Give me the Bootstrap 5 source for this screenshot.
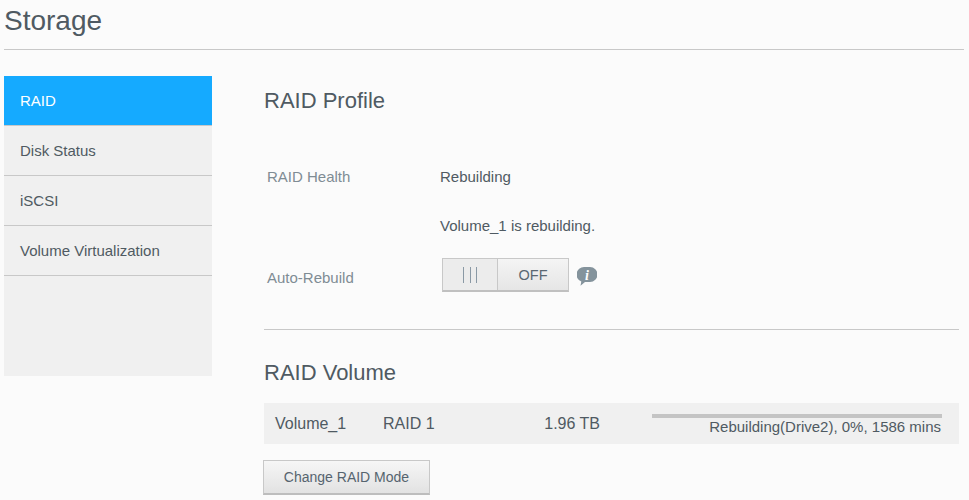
<!DOCTYPE html>
<html lang="en">
<head>
<meta charset="utf-8">
<title>Storage</title>
<link href="https://cdn.jsdelivr.net/npm/bootstrap@5.3.0/dist/css/bootstrap.min.css" rel="stylesheet">
<style>
html,body{height:500px;overflow:hidden}
body{background:#fbfbfb;font-family:"Liberation Sans",Arial,sans-serif;font-size:15px;color:#4f5a62;line-height:20px}
.page-head{margin:0 5px 0 4px;height:50px;border-bottom:1px solid #c8c8c8}
.page-title{font-size:28px;font-weight:400;line-height:30px;margin:0;padding-top:6px;color:#4f5a62}
.layout{margin-top:26px;padding-left:4px}
.side{width:208px;height:300px;background:#f0f0f0;flex:none}
.side-item{height:50px;padding:15px 16px 0;border-bottom:1px solid #c8c8c8;color:#4f5a62;text-decoration:none;display:block}
.side-item.on{background:#15aaff;color:#fff;border-bottom-color:#c8c8c8}
.main{margin-left:52px;width:695px}
.sec-title{font-size:22px;font-weight:400;line-height:26px;margin:0;color:#4f5a62}
.lbl{width:176px;padding-left:3px;color:#7f8c94;flex:none}
.lbl-low{padding-top:6px}
.form-rows{margin-top:53px}
.row-two{margin-top:29px}
.row-three{margin-top:22px}
.switcher{width:127px;height:34px;border:1px solid #c8c8c8;border-bottom:2px solid #c0c0c0;background:linear-gradient(#f4f4f4,#e6e6e6);margin-left:2px}
.switch-grip{width:55px;border-right:1px solid #c8c8c8;background:#ececec;gap:5.5px}
.switch-grip span{width:1px;height:16px;background:#8a99a5}
.switch-txt{color:#5a6873;font-size:14.5px}
.info-ic{width:20px;height:19px;margin:2px 0 0 8px;flex:none}
.divider{border-top:1px solid #c8c8c8;margin:37px 0 0;height:0}
.vol-title{margin-top:30px}
.vol-row{height:41px;background:#f0f0f0;margin-top:17px;font-size:16px}
.c1{width:119px;padding-left:11px;flex:none;padding-top:11px}
.c2{width:90px;flex:none;padding-top:11px}
.c3{width:127px;text-align:right;flex:none;padding-top:11px}
.c4{width:290px;margin-left:52px;flex:none;font-size:15px}
.bar{height:4px;background:#c4c4c4;margin-top:11px}
.bar-txt{text-align:right;line-height:18px;padding-right:1px}
.btn-change{width:167px;height:35px;margin:16px 0 0 -1px;padding:0;border:1px solid #c8c8c8;border-bottom:2px solid #bdbdbd;border-radius:0;background:linear-gradient(#f6f6f6,#e2e2e2);color:#56646f;font-size:14px;display:block}
</style>
</head>
<body>
<header class="page-head"><h1 class="page-title">Storage</h1></header>
<div class="layout d-flex">
  <nav class="side">
    <a class="side-item on" href="#">RAID</a>
    <a class="side-item" href="#">Disk Status</a>
    <a class="side-item" href="#">iSCSI</a>
    <a class="side-item" href="#">Volume Virtualization</a>
  </nav>
  <main class="main">
    <h2 class="sec-title pt-1 mt-2">RAID Profile</h2>
    <div class="form-rows">
      <div class="d-flex"><div class="lbl">RAID Health</div><div>Rebuilding</div></div>
      <div class="d-flex row-two"><div class="lbl"></div><div>Volume_1 is rebuilding.</div></div>
      <div class="d-flex align-items-center row-three">
        <div class="lbl lbl-low">Auto-Rebuild</div>
        <div class="switcher d-flex">
          <div class="switch-grip d-flex justify-content-center align-items-center"><span></span><span></span><span></span></div>
          <div class="switch-txt flex-grow-1 d-flex justify-content-center align-items-center">OFF</div>
        </div>
        <svg class="info-ic" viewBox="0 0 20 19" aria-hidden="true"><path d="M7 0h6a7 7 0 0 1 0 15H8l-4.500 3.800 .8-4.300A7.500 7.500 0 0 1 7 0z" fill="#84939c"/><text x="10" y="12.500" text-anchor="middle" font-family="Liberation Serif" font-style="italic" font-weight="700" font-size="14" fill="#fff">i</text></svg>
      </div>
    </div>
    <div class="divider"></div>
    <h2 class="sec-title vol-title">RAID Volume</h2>
    <div class="vol-row d-flex">
      <div class="c1">Volume_1</div>
      <div class="c2">RAID 1</div>
      <div class="c3">1.96 TB</div>
      <div class="c4"><div class="bar"></div><div class="bar-txt">Rebuilding(Drive2), 0%, 1586 mins</div></div>
    </div>
    <button class="btn btn-change" type="button">Change RAID Mode</button>
  </main>
</div>
<script src="https://cdn.jsdelivr.net/npm/bootstrap@5.3.0/dist/js/bootstrap.bundle.min.js"></script>
</body>
</html>
